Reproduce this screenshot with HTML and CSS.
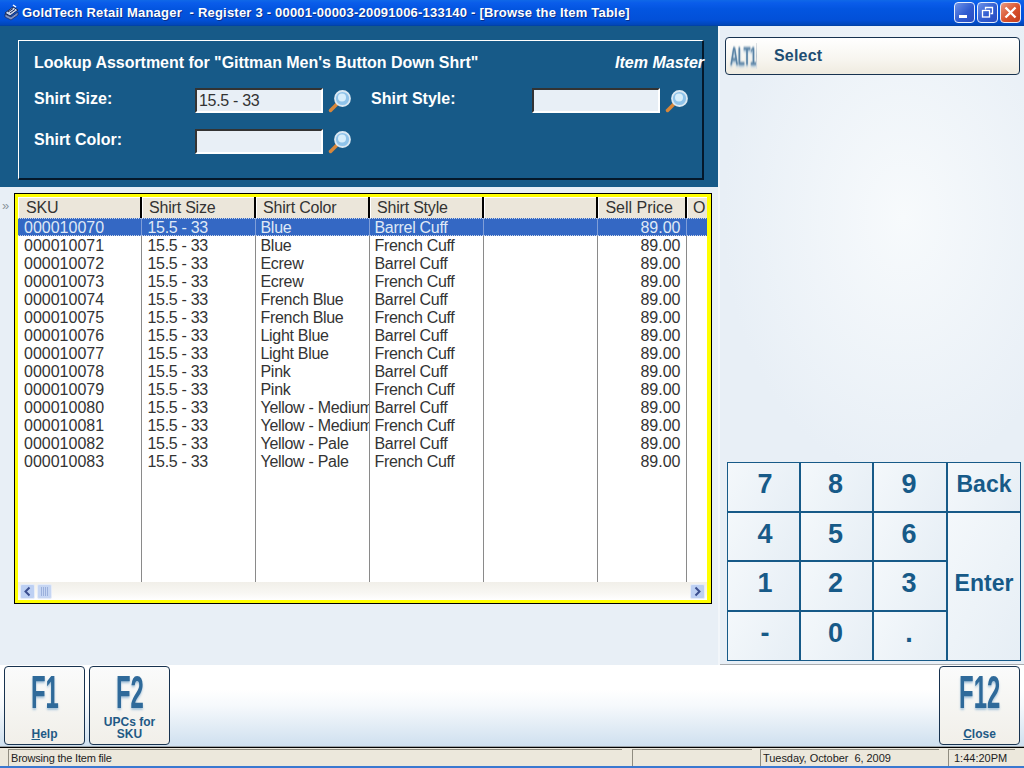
FILE: index.html
```html
<!DOCTYPE html>
<html lang="en">
<head>
<meta charset="utf-8">
<title>GoldTech Retail Manager</title>
<link rel="stylesheet" href="styles.css">
</head>
<body>
<div class="window">
  <header class="titlebar">
    <svg class="appicon" width="17" height="17" viewBox="0 0 17 17"><path d="M2 9l8-6 5 3-8 6z" fill="#c9d6ee" stroke="#1b2a55"/><path d="M2 10l6 3 7-5v3l-7 5-6-3z" fill="#7f93c4" stroke="#1b2a55" stroke-width=".7"/><path d="M5 8l5-3.500M7 9l5-3.500" stroke="#1b2a55"/><path d="M10 1l3 2" stroke="#fff" stroke-width="1.500"/></svg>
    <span class="title">GoldTech Retail Manager&nbsp; - Register 3 - 00001-00003-20091006-133140 - [Browse the Item Table]</span>
    <div class="winbtns">
      <span class="winbtn"><svg width="21" height="21" viewBox="0 0 21 21"><rect x="5" y="13" width="8" height="3" fill="#fff"/></svg></span>
      <span class="winbtn"><svg width="21" height="21" viewBox="0 0 21 21"><path d="M8.500 7.500V5.500h7v6h-2" fill="none" stroke="#fff" stroke-width="1.300"/><rect x="5.500" y="8.500" width="7" height="6.500" fill="none" stroke="#fff" stroke-width="1.300"/></svg></span>
      <span class="winbtn close"><svg width="21" height="21" viewBox="0 0 21 21"><path d="M5.500 5.500l10 10M15.500 5.500l-10 10" stroke="#fff" stroke-width="2.400"/></svg></span>
    </div>
  </header>

  <div class="workspace">
    <main class="leftcol">
      <section class="lookup-band">
        <div class="lookup">
          <div class="lookup-head">
            <h1 class="lookup-title">Lookup Assortment for "Gittman Men's Button Down Shrt"</h1>
            <span class="lookup-tag">Item Master</span>
          </div>
          <div class="fields">
            <label class="f-label">Shirt Size:</label>
            <div class="f-input">15.5 - 33</div>
            <svg class="lens" width="24" height="24" viewBox="0 0 24 24"><path d="M2.500 21.500l7-7" stroke="#d8873a" stroke-width="3.500" stroke-linecap="round"/><circle cx="14.500" cy="9.500" r="7.500" fill="#8fc3ea" stroke="#dbe8f2" stroke-width="1.800"/><circle cx="14" cy="8.500" r="4" fill="#d8eefb"/></svg>
            <label class="f-label col5">Shirt Style:</label>
            <div class="f-input"></div>
            <svg class="lens" width="24" height="24" viewBox="0 0 24 24"><path d="M2.500 21.500l7-7" stroke="#d8873a" stroke-width="3.500" stroke-linecap="round"/><circle cx="14.500" cy="9.500" r="7.500" fill="#8fc3ea" stroke="#dbe8f2" stroke-width="1.800"/><circle cx="14" cy="8.500" r="4" fill="#d8eefb"/></svg>
            <label class="f-label col1">Shirt Color:</label>
            <div class="f-input"></div>
            <svg class="lens" width="24" height="24" viewBox="0 0 24 24"><path d="M2.500 21.500l7-7" stroke="#d8873a" stroke-width="3.500" stroke-linecap="round"/><circle cx="14.500" cy="9.500" r="7.500" fill="#8fc3ea" stroke="#dbe8f2" stroke-width="1.800"/><circle cx="14" cy="8.500" r="4" fill="#d8eefb"/></svg>
          </div>
        </div>
      </section>

      <div class="grid-row">
        <span class="gutter">»</span>
        <div class="frame">
          <div class="frame-in">
            <table class="items">
              <colgroup>
                <col class="c1"><col class="c2"><col class="c2"><col class="c2"><col class="c2"><col class="c6"><col class="c7">
              </colgroup>
              <thead>
                <tr><th>SKU</th><th>Shirt Size</th><th>Shirt Color</th><th>Shirt Style</th><th></th><th class="num">Sell Price</th><th>O</th></tr>
              </thead>
              <tbody>
                <tr class="sel"><td>000010070</td><td>15.5 - 33</td><td>Blue</td><td>Barrel Cuff</td><td></td><td class="num">89.00</td><td></td></tr>
                <tr><td>000010071</td><td>15.5 - 33</td><td>Blue</td><td>French Cuff</td><td></td><td class="num">89.00</td><td></td></tr>
                <tr><td>000010072</td><td>15.5 - 33</td><td>Ecrew</td><td>Barrel Cuff</td><td></td><td class="num">89.00</td><td></td></tr>
                <tr><td>000010073</td><td>15.5 - 33</td><td>Ecrew</td><td>French Cuff</td><td></td><td class="num">89.00</td><td></td></tr>
                <tr><td>000010074</td><td>15.5 - 33</td><td>French Blue</td><td>Barrel Cuff</td><td></td><td class="num">89.00</td><td></td></tr>
                <tr><td>000010075</td><td>15.5 - 33</td><td>French Blue</td><td>French Cuff</td><td></td><td class="num">89.00</td><td></td></tr>
                <tr><td>000010076</td><td>15.5 - 33</td><td>Light Blue</td><td>Barrel Cuff</td><td></td><td class="num">89.00</td><td></td></tr>
                <tr><td>000010077</td><td>15.5 - 33</td><td>Light Blue</td><td>French Cuff</td><td></td><td class="num">89.00</td><td></td></tr>
                <tr><td>000010078</td><td>15.5 - 33</td><td>Pink</td><td>Barrel Cuff</td><td></td><td class="num">89.00</td><td></td></tr>
                <tr><td>000010079</td><td>15.5 - 33</td><td>Pink</td><td>French Cuff</td><td></td><td class="num">89.00</td><td></td></tr>
                <tr><td>000010080</td><td>15.5 - 33</td><td>Yellow - Medium</td><td>Barrel Cuff</td><td></td><td class="num">89.00</td><td></td></tr>
                <tr><td>000010081</td><td>15.5 - 33</td><td>Yellow - Medium</td><td>French Cuff</td><td></td><td class="num">89.00</td><td></td></tr>
                <tr><td>000010082</td><td>15.5 - 33</td><td>Yellow - Pale</td><td>Barrel Cuff</td><td></td><td class="num">89.00</td><td></td></tr>
                <tr><td>000010083</td><td>15.5 - 33</td><td>Yellow - Pale</td><td>French Cuff</td><td></td><td class="num">89.00</td><td></td></tr>
                <tr class="filler"><td></td><td></td><td></td><td></td><td></td><td></td><td></td></tr>
              </tbody>
            </table>
            <div class="hscroll">
              <span class="sb-btn"><svg width="15" height="15" viewBox="0 0 15 15"><path d="M9.500 3.500l-4 4 4 4" fill="none" stroke="#3b4f8f" stroke-width="2"/></svg></span>
              <span class="sb-thumb"></span>
              <span class="sb-space"></span>
              <span class="sb-btn"><svg width="15" height="15" viewBox="0 0 15 15"><path d="M5.500 3.500l4 4-4 4" fill="none" stroke="#3b4f8f" stroke-width="2"/></svg></span>
            </div>
          </div>
        </div>
      </div>
    </main>

    <aside class="rightcol">
      <button class="alt-btn"><span class="blur-key alt">ALT1</span><span class="alt-sep"></span><span class="alt-label">Select</span></button>
      <div class="keypad">
        <div class="key ka">7</div><div class="key kb">8</div><div class="key kb">9</div><div class="key word">Back</div>
        <div class="key ka">4</div><div class="key kb">5</div><div class="key kb">6</div><div class="key word enter">Enter</div>
        <div class="key ka">1</div><div class="key kb">2</div><div class="key kb">3</div>
        <div class="key ka">-</div><div class="key kb">0</div><div class="key kb">.</div>
      </div>
    </aside>
  </div>

  <nav class="fbar">
    <button class="fkey"><span class="blur-key">F1</span><span class="fkey-label"><u>H</u>elp</span></button>
    <button class="fkey"><span class="blur-key">F2</span><span class="fkey-label">UPCs for SKU</span></button>
    <span class="fbar-space"></span>
    <button class="fkey"><span class="blur-key">F12</span><span class="fkey-label"><u>C</u>lose</span></button>
  </nav>

  <footer class="status">
    <div class="pane p1">Browsing the Item file</div>
    <div class="pane p2"></div>
    <div class="pane p3">Tuesday, October&nbsp; 6, 2009</div>
    <div class="pane p4">1:44:20PM</div>
  </footer>
</div>
</body>
</html>
```

FILE: styles.css
```css
* { box-sizing: border-box; }
html, body { margin: 0; padding: 0; }
body { width: 1024px; height: 768px; overflow: hidden; font-family: "Liberation Sans", Arial, sans-serif; background: #e8eff6; }
.window { display: flex; flex-direction: column; width: 1024px; height: 768px; }

.titlebar { flex: 0 0 26px; display: flex; align-items: center; padding: 0 3px 1px 3px; background: linear-gradient(#0f68e8 0, #0a5cea 3px, #0355e0 9px, #0250d8 20px, #0146b8 25px, #013f98 26px); color: #fff; }
.appicon { flex: none; margin-right: 2px; }
.title { flex: 1; font-size: 13px; font-weight: 700; letter-spacing: .21px; white-space: nowrap; text-shadow: 1px 1px 0 #0a2f8a; }
.winbtns { display: flex; gap: 2px; }
.winbtn { display: block; width: 21px; height: 21px; border: 1px solid #e6eefc; border-radius: 4px; background: linear-gradient(135deg, #6f93e8, #2f5bd0 55%, #2a4cc0); }
.winbtn svg { display: block; margin: -1px; }
.winbtn.close { background: linear-gradient(135deg, #ea9a80, #d8512c 55%, #c23c1c); }

.workspace { flex: 0 0 639px; display: flex; }
.leftcol { flex: 0 0 720px; display: flex; flex-direction: column; border-right: 2px solid #f2f6fa; }
.lookup-band { flex: 0 0 161px; padding: 14px 14px 7px 18px; background: #175a88; }
.lookup { height: 140px; width: 686px; padding: 0 0 0 15px; border: solid #04182a; border-width: 1px 2px 2px 1px; border-top-color: #fff; border-left-color: #fff; color: #fff; }
.lookup-head { display: flex; align-items: center; justify-content: space-between; height: 42px; padding-top: 1px; }
.lookup-title { margin: 0; font-size: 16px; font-weight: 700; letter-spacing: -.03px; }
.lookup-tag { font-size: 16px; font-weight: 700; font-style: italic; margin-right: -2px; white-space: nowrap; }
.fields { display: grid; grid-template-columns: 161px 128px 24px 24px 161px 128px 24px; grid-template-rows: 25px 25px; row-gap: 16px; align-items: center; padding-top: 5px; }
.f-label { padding-bottom: 4px; font-size: 16px; font-weight: 700; }
.f-input { height: 25px; padding: 1px 0 0 2px; background: #e8eff6; border: 2px solid; border-color: #333 #fff #fff #333; color: #333; font-size: 16px; letter-spacing: -.3px; line-height: 19px; }
.lens { margin: 0 0 0 5px; }
.col5 { grid-column: 5; }
.col1 { grid-column: 1; }

.grid-row { display: flex; padding: 6px 0 0 0; }
.gutter { flex: 0 0 14px; padding: 5px 0 0 2px; font-size: 13px; line-height: 16px; color: #8a949e; }
.frame { width: 698px; height: 411px; border: 1px solid #000; }
.frame-in { display: flex; flex-direction: column; height: 409px; border: solid #ffff00; border-width: 3px 4px 3px 3px; background: #fff; }
.items { width: 689px; height: 385px; border-collapse: collapse; table-layout: fixed; font-size: 16px; color: #333; }
.c1 { width: 123px; }
.c2 { width: 114px; }
.c6 { width: 89px; }
.c7 { width: 21px; }
.items th { height: 21px; padding: 1px 0 0 7px; background: #ebe6da; border-right: 2px solid #000; font-weight: 400; letter-spacing: -.2px; text-align: left; overflow: hidden; white-space: nowrap; box-shadow: inset 1px 1px 0 #fff; }
.items th:first-child { padding-left: 8px; }
.items th:last-child { border-right: 0; padding-left: 6px; }
.items td { height: 18px; padding: 2px 0 0 5px; border-right: 1px solid #8a8a8a; overflow: hidden; white-space: nowrap; line-height: 16px; letter-spacing: -.3px; }
.items td:first-child { padding-left: 6px; letter-spacing: 0; }
.items td:nth-child(2) { padding-left: 6px; }
.items td:last-child { border-right: 0; }
.items th.num { text-align: right; padding: 1px 12px 0 0; letter-spacing: 0; }
.items td.num { text-align: right; padding: 2px 5px 0 0; letter-spacing: 0; }
.sel td { background: repeating-linear-gradient(90deg, #c9d4e8 0 1px, transparent 1px 2px) top / 100% 1px no-repeat, repeating-linear-gradient(90deg, #c9d4e8 0 1px, transparent 1px 2px) bottom / 100% 1px no-repeat, #3468c4; color: #dfe8f6; border-right-color: #7f9ed8; }
.items .filler td { height: 112px; }
.hscroll { flex: 0 0 18px; display: flex; align-items: center; padding: 0 2px; background: linear-gradient(#f1efe9, #f8f7f3 60%, #fff); }
.sb-btn { flex: none; width: 15px; height: 15px; border: 1px solid #e6ecf8; border-radius: 2px; background: #bdd0f3; }
.sb-btn svg { display: block; margin: -1px; }
.sb-thumb { flex: none; width: 15px; height: 15px; margin-left: 2px; border: 1px solid #e6ecf8; border-radius: 2px; background: repeating-linear-gradient(90deg, #c6d6f3 0 1px, #9bb0dc 1px 2px) center / 9px 9px no-repeat, #c6d6f3; }
.sb-space { flex: 1; }

.rightcol { flex: 1; display: flex; flex-direction: column; padding: 11px 4px 3px 5px; background: radial-gradient(ellipse 180px 260px at 60% 30%, #f7fafc, #e8eff6 100%), #e8eff6; border-bottom: 1px solid #a8acb0; }
.alt-btn { display: flex; align-items: center; width: 295px; height: 38px; padding: 0 0 0 4px; border: 1px solid #17324f; border-radius: 4px; background: linear-gradient(#fff, #f7f5ef 60%, #efebe0); font-family: inherit; cursor: default; }
.blur-key { display: block; font-weight: 700; color: #2f6a9a; text-shadow: 0 2px 3px #a8c4da; font-size: 46px; line-height: 46px; transform: scaleX(.52); white-space: nowrap; filter: blur(.7px); }
.blur-key.alt { width: 26px; font-size: 25px; line-height: 28px; letter-spacing: -1px; transform: scaleX(.46); transform-origin: left center; color: #5a83a5; filter: blur(.9px); }
.alt-sep { flex: none; width: 1px; height: 26px; background: linear-gradient(#dfe3e6, #b8c4ce, #e4e6e6); }
.alt-label { margin-left: 17px; font-size: 16px; font-weight: 700; color: #1f4e73; letter-spacing: .2px; }
.keypad { margin: auto 0 0 2px; display: grid; grid-template-columns: 71px 71px 72px 72px; grid-template-rows: 48px 47px 48px 48px; gap: 2px; width: 294px; height: 199px; padding: 1px; background: #175a88; }
.key { display: flex; align-items: center; justify-content: center; padding-bottom: 5px; background: linear-gradient(120deg, #f4f8fb, #e6eef5); color: #175a88; font-size: 27px; font-weight: 700; }
.ka { padding-left: 3px; }
.kb { padding-right: 2px; }
.word { font-size: 23px; padding-bottom: 6px; }
.enter { grid-column: 4; grid-row: 2 / 5; }

.fbar { flex: 0 0 82px; display: flex; align-items: flex-start; padding: 1px 4px 0 4px; gap: 4px; background: linear-gradient(#fff 30%, #f6f9fc 50%, #cfe0ef); border-bottom: 1px solid #9ca3a8; }
.fbar-space { flex: 1; }
.fkey { display: flex; flex-direction: column; align-items: center; width: 81px; height: 79px; padding: 0 2px 4px; border: 1px solid #17324f; border-radius: 4px; background: linear-gradient(#fafbfb, #f1efe9); font-family: inherit; cursor: default; }
.fkey .blur-key { margin-top: 2px; height: 46px; }
.fkey-label { flex: 1; display: flex; align-items: flex-end; justify-content: center; width: 60px; text-align: center; font-size: 12px; line-height: 12px; font-weight: 700; color: #1f5a85; }
.fkey-label u { text-decoration: underline; }

.status { flex: 0 0 21px; display: flex; align-items: flex-start; padding: 1px 0 0 8px; background: #ece8dc; border-top: 1px solid #000; border-bottom: 2px solid #3a78d0; font-size: 11px; color: #222; }
.pane { height: 17px; padding: 1px 0 0 2px; line-height: 15px; border-left: 1px solid #8f8c80; border-top: 1px solid #8f8c80; white-space: nowrap; overflow: hidden; letter-spacing: -.2px; }
.p1 { width: 614px; }
.p2 { width: 120px; margin-left: 10px; }
.p3 { width: 179px; margin-left: 8px; letter-spacing: -.05px; }
.p4 { width: 67px; margin-left: 9px; padding-left: 5px; letter-spacing: 0; }
```
